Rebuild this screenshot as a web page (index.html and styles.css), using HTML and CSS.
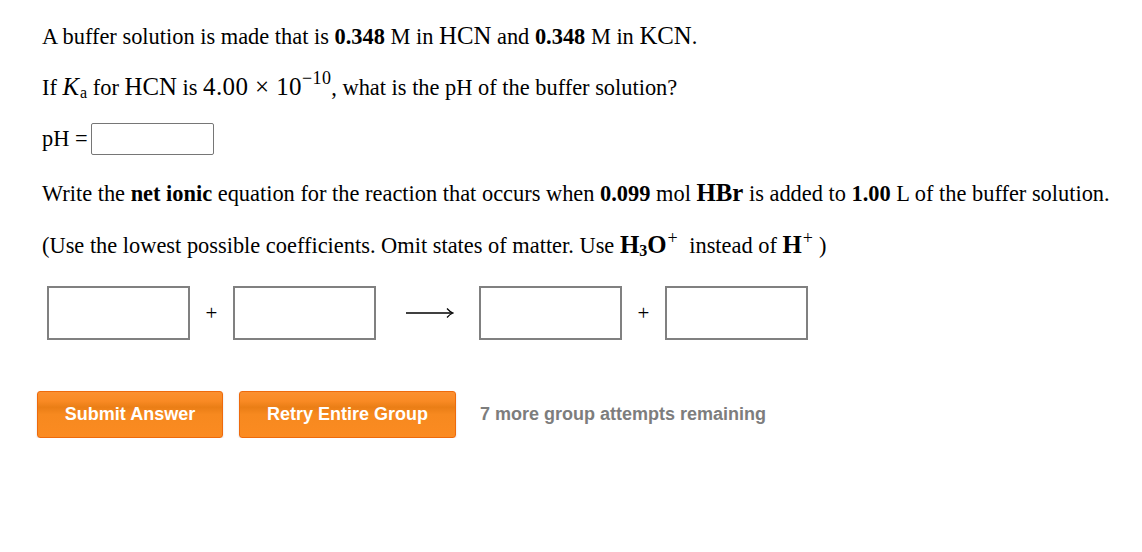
FILE: index.html
```html
<!DOCTYPE html>
<html>
<head>
<meta charset="utf-8">
<link rel="stylesheet" href="styles.css">
</head>
<body>
<div class="page">
  <p class="line l1">A buffer solution is made that is <b>0.348</b> M in <span class="m">HCN</span> and <b>0.348</b> M in <span class="m">KCN</span>.</p>
  <p class="line l2">If <i class="m">K</i><sub class="ka">a</sub> for <span class="m">HCN</span> is <span class="m m2">4.00 × 10<sup class="exp">−10</sup></span>, what is the pH of the buffer solution?</p>
  <div class="line l3"><span>pH =</span><span class="ph-input"></span></div>
  <p class="line l4">Write the <b>net ionic</b> equation for the reaction that occurs when <b>0.099</b> mol <span class="m mb">HBr</span> is added to <b>1.00</b> L of the buffer solution.</p>
  <p class="line l5">(Use the lowest possible coefficients. Omit states of matter. Use <span class="m mb">H<sub class="s3">3</sub>O<sup class="plus">+</sup></span> instead of <span class="m mb">H<sup class="plus">+</sup></span>)</p>
  <div class="eq">
    <span class="box"></span>
    <span class="op">+</span>
    <span class="box"></span>
    <span class="arrow"><svg width="48" height="12" viewBox="0 0 48 12"><line x1="0" y1="6" x2="46" y2="6" stroke="#000" stroke-width="1.5"/><path d="M41 1.5 Q44 5 47 6 Q44 7 41 10.5" fill="none" stroke="#000" stroke-width="1.2"/></svg></span>
    <span class="box"></span>
    <span class="op">+</span>
    <span class="box"></span>
  </div>
  <div class="actions">
    <button class="btn submit">Submit Answer</button>
    <button class="btn retry">Retry Entire Group</button>
    <span class="remaining">7 more group attempts remaining</span>
  </div>
</div>
</body>
</html>
```

FILE: styles.css
```css
html, body {
  margin: 0;
  padding: 0;
  background: #fff;
}
.page {
  padding: 23px 0 0 42px;
  font-family: "Liberation Serif", "Times New Roman", serif;
  font-size: 22.4px;
  color: #000;
}
.line {
  margin: 0;
  line-height: 28px;
  white-space: nowrap;
}
.l2 { margin-top: 23px; }
.l3 {
  margin-top: 21px;
  display: flex;
  align-items: center;
}
.l4 { margin-top: 25px; }
.l5 { margin-top: 24px; }
.m {
  font-size: 24.8px;
  line-height: 0;
}
.m2 {
  font-size: 25px;
  letter-spacing: 0.4px;
}
.mb { font-weight: bold; }
.ka {
  font-size: 16px;
  vertical-align: -3px;
  line-height: 0;
  margin-left: 1px;
}
.exp {
  font-size: 18px;
  vertical-align: 11px;
  line-height: 0;
}
.s3 {
  font-size: 16px;
  vertical-align: -3px;
  line-height: 0;
}
.plus {
  font-size: 18px;
  font-weight: normal;
  vertical-align: 9px;
  line-height: 0;
  margin-left: 1px;
  margin-right: 6px;
}
.ph-input {
  display: inline-block;
  width: 121px;
  height: 30px;
  border: 1px solid #767676;
  border-radius: 2px;
  margin-left: 3px;
}
.eq {
  margin-top: 26px;
  margin-left: 5px;
  display: flex;
  align-items: center;
}
.box {
  display: inline-block;
  width: 139px;
  height: 50px;
  border: 2px solid #808080;
}
.op {
  width: 43px;
  text-align: center;
  font-size: 21px;
}
.arrow {
  display: flex;
  align-items: center;
  margin-left: 30px;
  margin-right: 25px;
}
.actions {
  margin-top: 51px;
  margin-left: -5px;
  display: flex;
  align-items: center;
}
.btn {
  font-family: "Liberation Sans", Arial, sans-serif;
  font-weight: bold;
  font-size: 18px;
  color: #fff;
  height: 47px;
  border: 1px solid #ee6a0c;
  border-radius: 3px;
  background: linear-gradient(to bottom, #fb9030 0%, #f98a24 20%, #ea7e16 34%, #f7891f 50%, #fb8b21 100%);
  box-shadow: 0 1px 2px rgba(0,0,0,0.15);
  padding: 0;
}
.submit { width: 186px; }
.retry { width: 217px; margin-left: 16px; }
.remaining {
  margin-left: 24px;
  font-family: "Liberation Sans", Arial, sans-serif;
  font-weight: bold;
  font-size: 18px;
  color: #7d7d7d;
}
```
